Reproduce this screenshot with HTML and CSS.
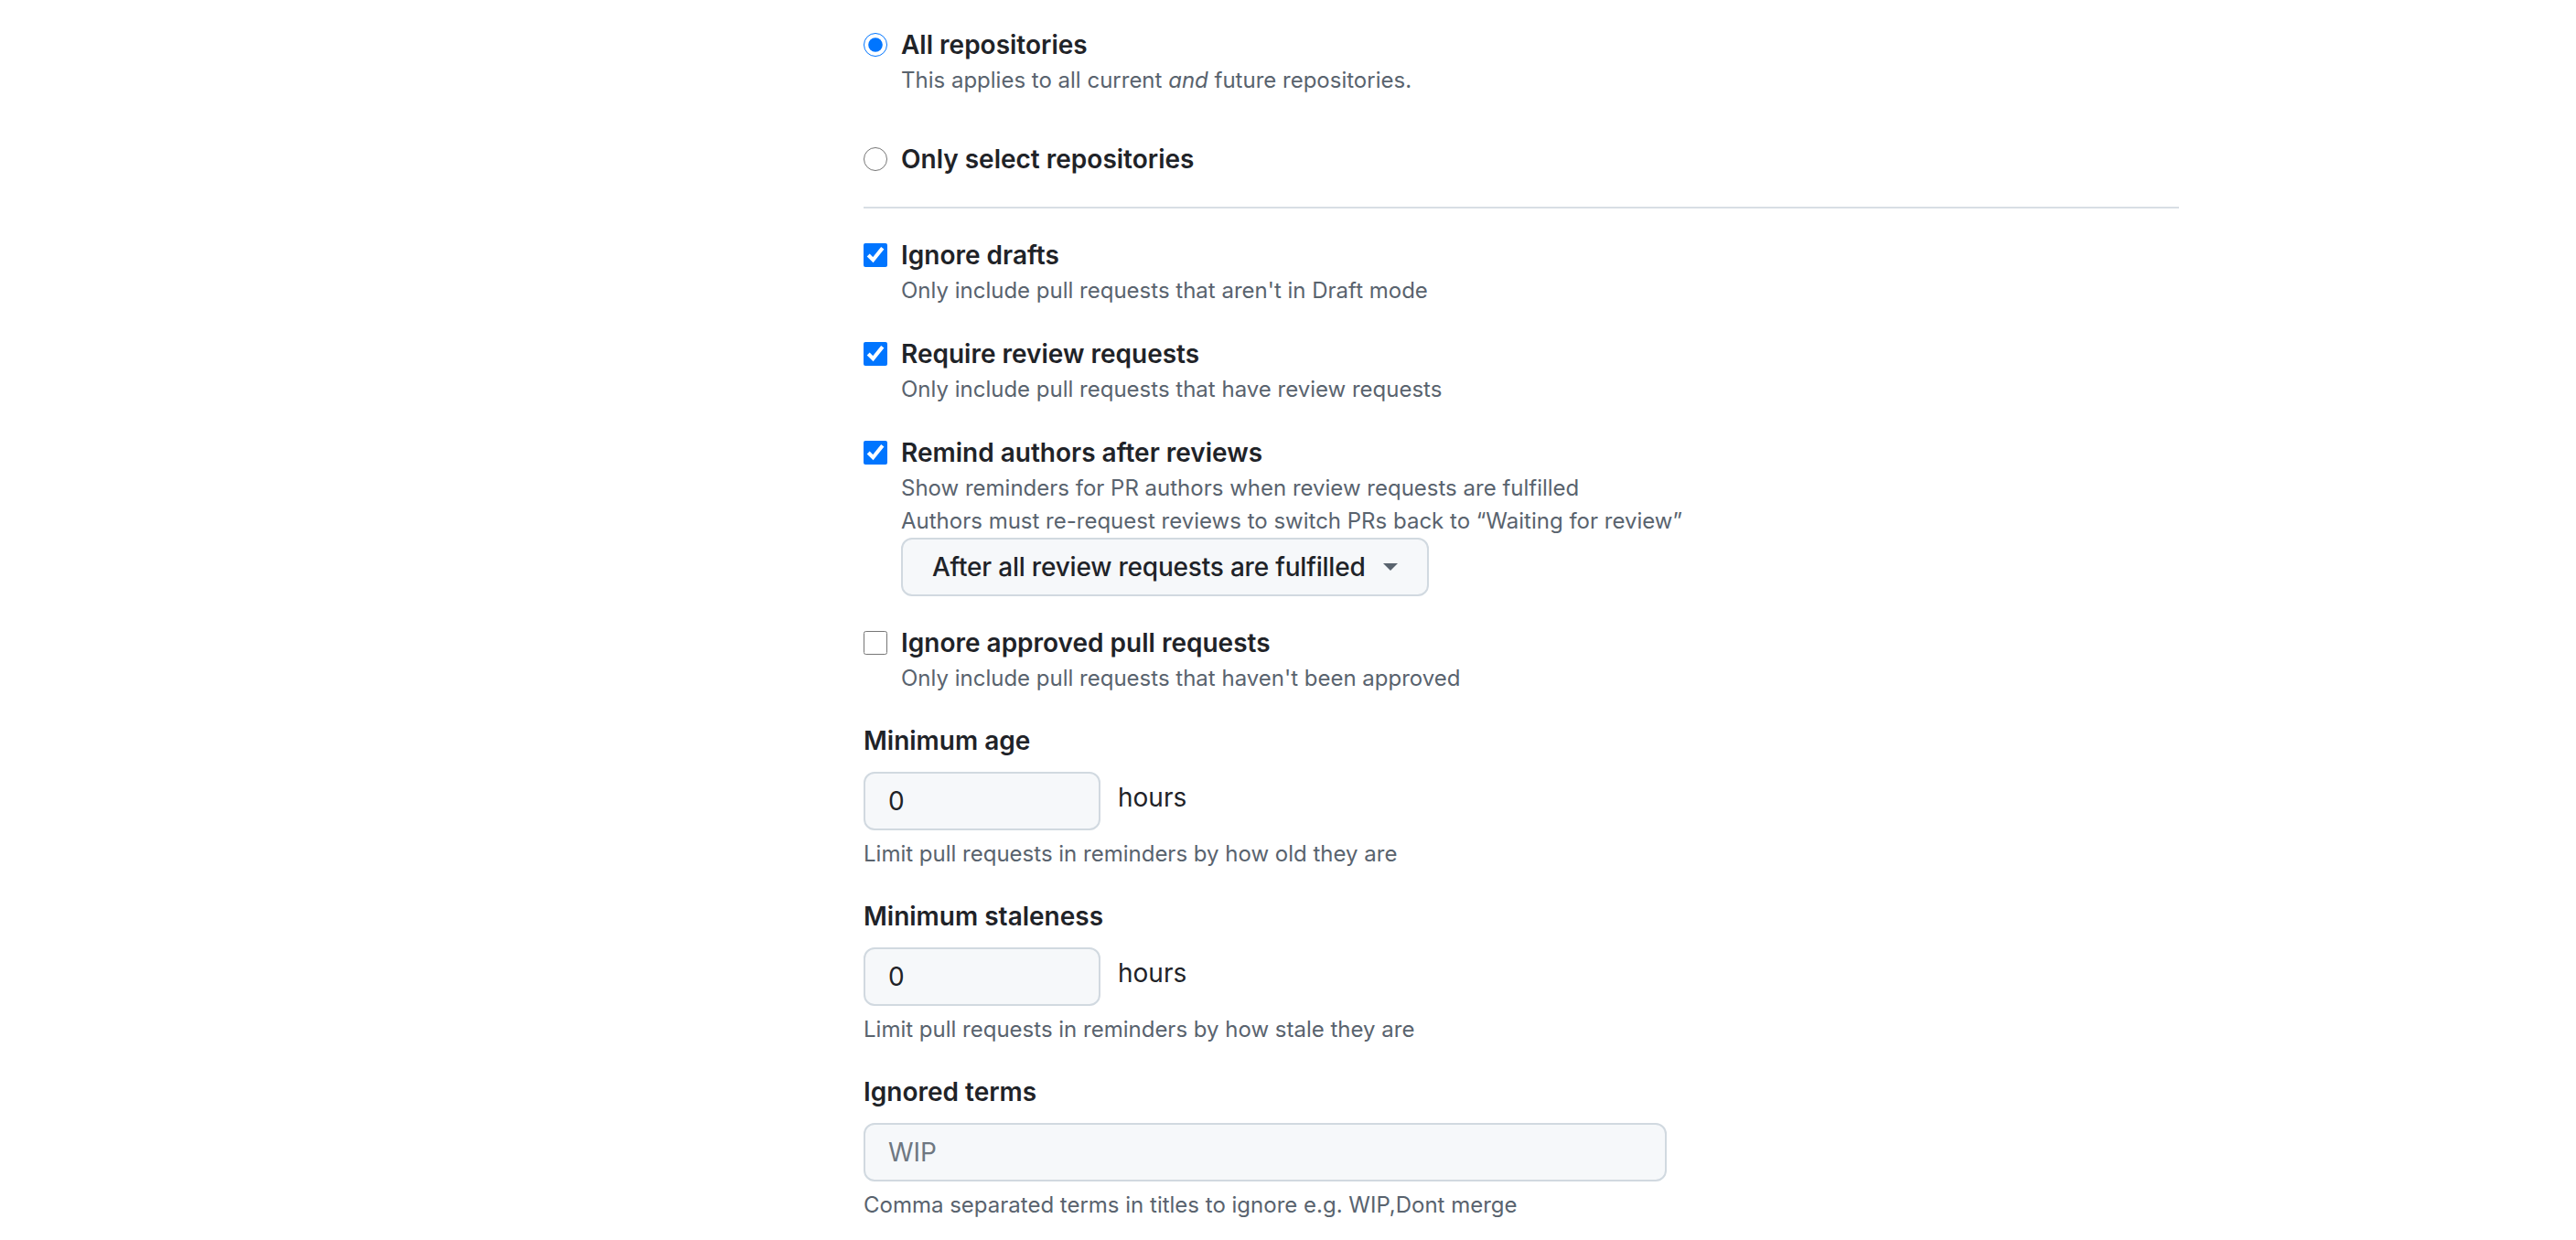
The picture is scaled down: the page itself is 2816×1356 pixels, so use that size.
FILE: index.html
```html
<!DOCTYPE html>
<html lang="en">
<head>
    <meta charset="UTF-8">
    <title>Scheduled reminders</title>
    <link rel="stylesheet" href="styles.css">
</head>
<body>
    <div class="settings">
        <div class="choices">
            <label class="option">
                <input type="radio" name="repos" checked>
                <span class="option-body">
                    <span class="option-title">All repositories</span>
                    <span class="note">This applies to all current <em>and</em> future repositories.</span>
                </span>
            </label>
            <label class="option">
                <input type="radio" name="repos">
                <span class="option-body">
                    <span class="option-title">Only select repositories</span>
                </span>
            </label>
        </div>

        <hr class="divider">

        <div class="checks">
            <label class="option">
                <input type="checkbox" checked>
                <span class="option-body">
                    <span class="option-title">Ignore drafts</span>
                    <span class="note">Only include pull requests that aren't in Draft mode</span>
                </span>
            </label>
            <label class="option">
                <input type="checkbox" checked>
                <span class="option-body">
                    <span class="option-title">Require review requests</span>
                    <span class="note">Only include pull requests that have review requests</span>
                </span>
            </label>
            <div class="option">
                <input type="checkbox" checked>
                <div class="option-body">
                    <span class="option-title">Remind authors after reviews</span>
                    <span class="note">Show reminders for PR authors when review requests are fulfilled</span>
                    <span class="note">Authors must re-request reviews to switch PRs back to “Waiting for review”</span>
                    <div>
                        <button class="select-btn" type="button">After all review requests are fulfilled<span class="caret"></span></button>
                    </div>
                </div>
            </div>
            <label class="option">
                <input type="checkbox">
                <span class="option-body">
                    <span class="option-title">Ignore approved pull requests</span>
                    <span class="note">Only include pull requests that haven't been approved</span>
                </span>
            </label>
        </div>

        <div class="form-group">
            <label class="group-label">Minimum age</label>
            <div class="field-row">
                <input class="form-control short" type="text" value="0">
                <span class="unit">hours</span>
            </div>
            <p class="note">Limit pull requests in reminders by how old they are</p>
        </div>

        <div class="form-group">
            <label class="group-label">Minimum staleness</label>
            <div class="field-row">
                <input class="form-control short" type="text" value="0">
                <span class="unit">hours</span>
            </div>
            <p class="note">Limit pull requests in reminders by how stale they are</p>
        </div>

        <div class="form-group">
            <label class="group-label">Ignored terms</label>
            <div class="field-row">
                <input class="form-control wide" type="text" placeholder="WIP">
            </div>
            <p class="note">Comma separated terms in titles to ignore e.g. WIP,Dont merge</p>
        </div>
    </div>
</body>
</html>
```

FILE: styles.css
```css
body {
    margin: 0;
    padding: 0;
    background: #ffffff;
    color: #1f2328;
    font-family: Inter, "Noto Sans", "Liberation Sans", sans-serif;
}
.settings {
    width: 1438px;
    margin-left: 944px;
    padding-top: 28px;
}
.option {
    display: flex;
    align-items: flex-start;
    gap: 15px;
}
.option input {
    width: 26px;
    height: 26px;
    margin: 8px 0 0 0;
    flex-shrink: 0;
}
.option-body {
    display: flex;
    flex-direction: column;
}
.option-title {
    font-size: 28px;
    line-height: 42px;
    font-weight: 600;
}
.note {
    margin: 0;
    font-size: 24px;
    line-height: 36px;
    color: #59636e;
}
.choices .option + .option {
    margin-top: 47px;
}
.divider {
    height: 2px;
    margin: 31px 0 30px 0;
    border: 0;
    background: #d8dee4;
}
.checks .option + .option {
    margin-top: 30px;
}
.select-btn {
    display: inline-flex;
    align-items: center;
    height: 64px;
    margin-top: 0;
    padding: 0 32px;
    border: 2px solid #d1d9e0;
    border-radius: 12px;
    background: #f6f8fa;
    color: #1f2328;
    font-family: inherit;
    font-size: 28px;
    font-weight: 500;
    letter-spacing: -0.2px;
}
.caret {
    margin-left: 19px;
    border-top: 8px solid #59636e;
    border-left: 8px solid transparent;
    border-right: 8px solid transparent;
}
.form-group {
    margin-top: 29px;
}
.group-label {
    display: block;
    font-size: 28px;
    line-height: 42px;
    font-weight: 600;
}
.field-row {
    display: flex;
    align-items: flex-start;
    gap: 19px;
    margin-top: 13px;
}
.form-control {
    box-sizing: border-box;
    height: 64px;
    padding: 0 25px;
    border: 2px solid #d1d9e0;
    border-radius: 12px;
    background: #f6f8fa;
    color: #1f2328;
    font-family: inherit;
    font-size: 28px;
}
.form-control::placeholder {
    color: #6e7781;
}
.short {
    width: 259px;
}
.wide {
    width: 878px;
}
.unit {
    font-size: 28px;
    line-height: 42px;
    padding-top: 7px;
}
.form-group .note {
    margin-top: 8px;
}
```
